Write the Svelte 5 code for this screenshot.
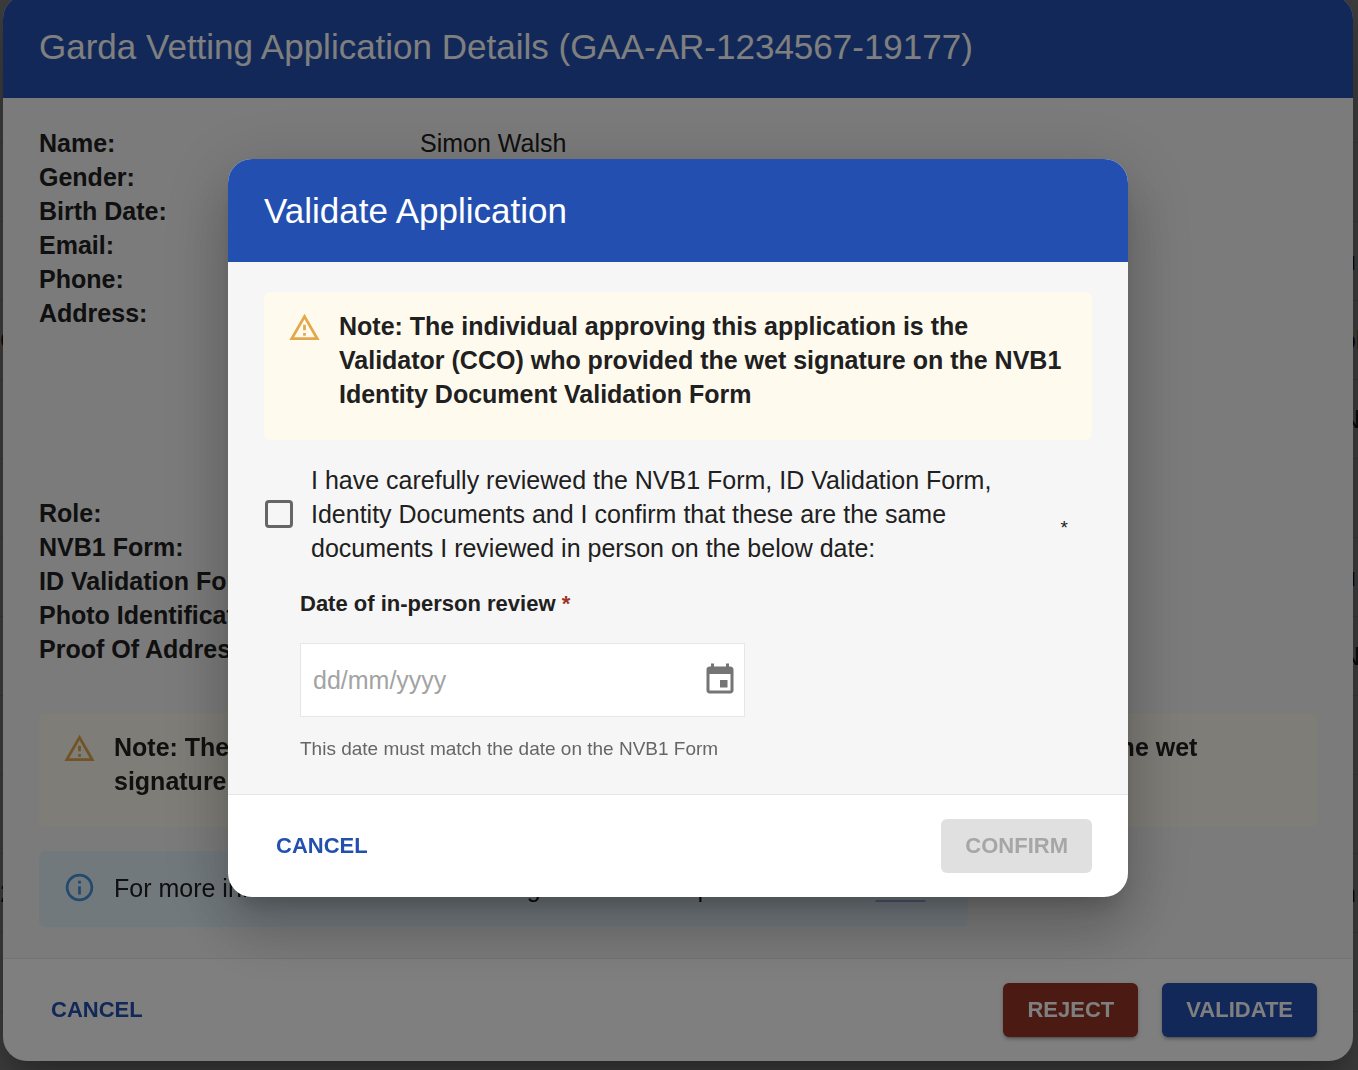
<script>
	const details = [
		["Name:", "Simon Walsh"],
		["Gender:", ""],
		["Birth Date:", ""],
		["Email:", ""],
		["Phone:", ""],
		["Address:", ""],
	];
	const documents = [
		["Role:", ""],
		["NVB1 Form:", ""],
		["ID Validation Form:", ""],
		["Photo Identification:", ""],
		["Proof Of Address:", ""],
	];

	// edges of the applications list that stay visible behind the dialog
	const rows = [
		["", ""],
		["", ""],
		["", "u"],
		["C", "ol"],
		["", "N"],
		["", ""],
		["", "u"],
		["", "N"],
		["", ""],
		["", ""],
		["2", "n"],
		["", ""],
		["", ""],
	];

	let reviewed = $state(false);
	let reviewDate = $state("");
</script>

{#snippet warningIcon()}
	<svg class="icon warning" viewBox="0 0 24 24" aria-hidden="true">
		<path
			d="M12 5.99L19.53 19H4.47L12 5.99M12 2L1 21h22L12 2zm1 14h-2v2h2v-2zm0-6h-2v4h2v-4z"
		/>
	</svg>
{/snippet}

{#snippet detailList(items)}
	<dl class="details">
		{#each items as [label, value]}
			<dt>{label}</dt>
			<dd>{value}</dd>
		{/each}
	</dl>
{/snippet}

<main class="list">
	{#each rows as [start, end]}
		<div class="list-row">
			<span>{start}</span>
			<span class="end">{end}</span>
		</div>
	{/each}
</main>

<div class="overlay">
	<section class="dialog application" aria-labelledby="application-title">
		<header>
			<h1 id="application-title">
				Garda Vetting Application Details (GAA-AR-1234567-19177)
			</h1>
		</header>
		<div class="content">
			{@render detailList(details)}
			{@render detailList(documents)}
			<div class="alert note">
				{@render warningIcon()}
				<p>
					Note: The individual approving this application is the Validator
					(CCO) who provided the wet<br />signature on the NVB1 Identity
					Document Validation Form
				</p>
			</div>
			<div class="alert info">
				<svg class="icon" viewBox="0 0 24 24" aria-hidden="true">
					<path
						d="M11 7h2v2h-2zm0 4h2v6h-2zm1-9C6.48 2 2 6.48 2 12s4.48 10 10 10 10-4.48 10-10S17.52 2 12 2zm0 18c-4.41 0-8-3.59-8-8s3.59-8 8-8 8 3.59 8 8-3.59 8-8 8z"
					/>
				</svg>
				<p>
					For more information on Garda Vetting Evidence Requirements click
					<a href="#requirements">here</a>
				</p>
			</div>
		</div>
		<footer>
			<button class="text" type="button">CANCEL</button>
			<div class="actions">
				<button class="reject" type="button">REJECT</button>
				<button class="primary" type="button">VALIDATE</button>
			</div>
		</footer>
	</section>
</div>

<div class="overlay">
	<section
		class="dialog validate"
		role="dialog"
		aria-modal="true"
		aria-labelledby="validate-title"
	>
		<header>
			<h2 id="validate-title">Validate Application</h2>
		</header>
		<div class="content">
			<div class="alert note">
				{@render warningIcon()}
				<p>
					Note: The individual approving this application is the<br />
					Validator (CCO) who provided the wet signature on the NVB1<br />
					Identity Document Validation Form
				</p>
			</div>
			<div class="confirm">
				<input id="reviewed" type="checkbox" bind:checked={reviewed} />
				<label for="reviewed">
					I have carefully reviewed the NVB1 Form, ID Validation Form,<br />
					Identity Documents and I confirm that these are the same<br />
					documents I reviewed in person on the below date:
				</label>
				<span class="required">*</span>
			</div>
			<div class="field">
				<label for="review-date">
					Date of in-person review <span>*</span>
				</label>
				<div class="date">
					<input
						id="review-date"
						type="text"
						placeholder="dd/mm/yyyy"
						aria-describedby="review-help"
						bind:value={reviewDate}
					/>
					<button type="button" aria-label="Choose date">
						<svg viewBox="0 0 24 24" aria-hidden="true">
							<path
								d="M17 12h-5v5h5v-5zM16 1v2H8V1H6v2H5c-1.11 0-1.99.9-1.99 2L3 19c0 1.1.89 2 2 2h14c1.1 0 2-.9 2-2V5c0-1.1-.9-2-2-2h-1V1h-2zm3 18H5V8h14v11z"
							/>
						</svg>
					</button>
				</div>
				<p id="review-help">This date must match the date on the NVB1 Form</p>
			</div>
		</div>
		<footer>
			<button class="text" type="button">CANCEL</button>
			<button
				class="primary"
				type="button"
				disabled={!reviewed || !reviewDate}>CONFIRM</button
			>
		</footer>
	</section>
</div>

<style>
	:global(body) {
		margin: 0;
		overflow: hidden;
		background: #f6f6f6;
		color: #202020;
		font-family: "Liberation Sans", Helvetica, Arial, sans-serif;
		font-size: 25px;
		line-height: 34px;
	}
	h1,
	h2,
	p,
	dl,
	dd {
		margin: 0;
	}

	.list {
		height: 100vh;
		padding-top: 64px;
		overflow: hidden;
		box-sizing: border-box;
	}
	.list-row {
		display: flex;
		align-items: center;
		justify-content: space-between;
		height: 78px;
		border-bottom: 1px solid #dcdcdc;
	}
	.list-row span {
		width: 16px;
		overflow: hidden;
		white-space: nowrap;
	}

	.overlay {
		position: fixed;
		inset: 0;
		display: flex;
		align-items: center;
		justify-content: center;
		padding: 0 2px 14px 0;
		background: rgba(0, 0, 0, 0.5);
	}
	.dialog {
		flex-shrink: 0;
		border-radius: 24px;
		overflow: hidden;
		background: #fff;
		box-shadow:
			0 16px 22px -10px rgba(0, 0, 0, 0.2),
			0 36px 57px 4px rgba(0, 0, 0, 0.14),
			0 13px 69px 12px rgba(0, 0, 0, 0.12);
	}
	.application {
		width: calc(100% - 6px);
	}
	.validate {
		width: 900px;
		max-width: calc(100% - 96px);
	}
	header {
		padding: 28px 36px 27px;
		background: #2350b0;
		color: #fff;
	}
	h1,
	h2 {
		font-size: 35px;
		font-weight: 400;
		line-height: 48px;
	}
	.content {
		padding: 30px 36px 28px;
		background: #f6f6f6;
		border-bottom: 1px solid #e6e6e6;
	}
	.application .content {
		padding: 28px 36px 31px;
	}
	footer {
		display: flex;
		align-items: center;
		justify-content: space-between;
		padding: 24px 36px;
	}

	.details {
		display: grid;
		grid-template-columns: 381px 1fr;
		grid-auto-rows: 34px;
	}
	.details + .details {
		margin: 166px 0 47px;
	}
	dt {
		font-weight: 700;
	}

	.alert {
		display: flex;
		gap: 18px;
		border-radius: 6px;
	}
	.icon {
		flex-shrink: 0;
		width: 33px;
		height: 33px;
		fill: #4594d8;
	}
	.warning {
		margin-top: 2px;
		fill: #e2a94b;
	}
	.note {
		padding: 17px 24px 29px;
		background: #fffaee;
		font-weight: 700;
	}
	.info {
		width: fit-content;
		margin-top: 24px;
		padding: 20px 42px 22px 24px;
		background: #e4f2fb;
	}
	a {
		color: #2350b0;
		text-decoration-color: rgba(35, 80, 176, 0.4);
		text-underline-offset: 3px;
	}

	.confirm {
		display: flex;
		align-items: center;
		margin: 23px 24px 0 1px;
	}
	.confirm input {
		appearance: none;
		box-sizing: border-box;
		flex-shrink: 0;
		width: 28px;
		height: 28px;
		margin: 0 18px 0 0;
		border: 3px solid #666;
		border-radius: 4px;
	}
	.confirm input:checked {
		border-color: #2350b0;
		background: #2350b0;
	}
	.required {
		margin-left: auto;
		padding-top: 28px;
		font-size: 19px;
	}

	.field {
		margin: 22px 0 0 36px;
	}
	.field label {
		display: block;
		font-size: 22px;
		font-weight: 700;
	}
	.field label span {
		color: #9c3527;
	}
	.date {
		display: flex;
		align-items: center;
		box-sizing: border-box;
		width: 445px;
		height: 74px;
		margin: 22px 0 15px;
		border: 1px solid #e6e6e6;
		background: #fff;
	}
	.date input {
		flex: 1;
		min-width: 0;
		padding: 0 12px;
		border: 0;
		outline: 0;
		background: none;
		font: inherit;
		color: inherit;
	}
	.date input::placeholder {
		color: #a3a3a3;
		opacity: 1;
	}
	.date button {
		min-height: 36px;
		margin-right: 6px;
		padding: 0;
	}
	.date svg {
		display: block;
		width: 36px;
		height: 36px;
		fill: #757575;
	}
	.field p {
		color: #666;
		font-size: 19px;
	}

	button {
		min-height: 54px;
		padding: 0 24px;
		border: 0;
		border-radius: 6px;
		background: none;
		color: #fff;
		font-family: inherit;
		font-size: 22px;
		font-weight: 700;
		cursor: pointer;
	}
	button.text {
		padding: 0 12px;
		color: #2350b0;
	}
	.actions {
		display: flex;
		gap: 24px;
	}
	.primary,
	.reject {
		box-shadow:
			0 4px 2px -3px rgba(0, 0, 0, 0.2),
			0 3px 3px rgba(0, 0, 0, 0.14),
			0 1px 7px rgba(0, 0, 0, 0.12);
	}
	.primary {
		background: #2350b0;
	}
	.reject {
		background: #963527;
	}
	.primary:disabled {
		background: #e0e0e0;
		color: #a6a6a6;
		box-shadow: none;
		cursor: default;
	}
</style>
